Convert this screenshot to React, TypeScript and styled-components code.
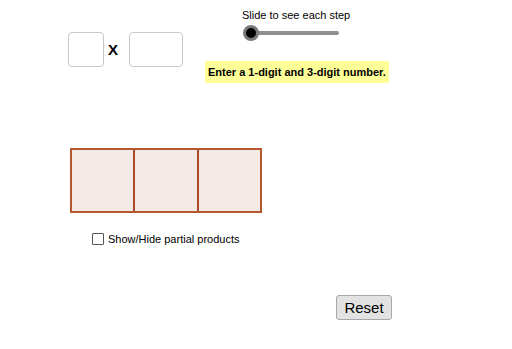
import React, { useState } from "react";
import styled, { createGlobalStyle } from "styled-components";

const GlobalStyle = createGlobalStyle`
  html, body {
    margin: 0;
    padding: 0;
    background: #ffffff;
  }
  body {
    font-family: "Liberation Sans", Arial, sans-serif;
  }
`;

const Canvas = styled.div`
  width: 512px;
  height: 349px;
  position: relative;
  overflow: hidden;
  background: #ffffff;
`;

const TopArea = styled.div`
  display: flex;
  align-items: flex-start;
  padding-left: 68px;
`;

const Inputs = styled.div`
  display: flex;
  align-items: center;
  margin-top: 32px;
`;

const NumberBox = styled.input<{ $w: number }>`
  box-sizing: border-box;
  width: ${(p) => p.$w}px;
  height: 35px;
  border: 1px solid #c8c8c8;
  border-radius: 4px;
  background: #ffffff;
  outline: none;
  padding: 0 4px;
  font-family: "Liberation Sans", Arial, sans-serif;
  font-size: 14px;
`;

const Times = styled.span`
  width: 25px;
  padding-left: 4px;
  box-sizing: border-box;
  font-size: 15px;
  font-weight: bold;
  color: #000000;
  line-height: 35px;
`;

const Controls = styled.div`
  display: flex;
  flex-direction: column;
  margin-left: 22px;
`;

const SliderLabel = styled.div`
  margin-top: 9px;
  padding-left: 37px;
  font-size: 11px;
  line-height: 13px;
  color: #000000;
`;

const SliderTrack = styled.div`
  position: relative;
  margin-top: 3px;
  margin-left: 38px;
  width: 96px;
  height: 16px;
`;

const TrackLine = styled.div`
  position: absolute;
  left: 8px;
  right: 0;
  top: 6px;
  height: 4px;
  border-radius: 2px;
  background: #8f8f8f;
`;

const Knob = styled.div`
  position: absolute;
  left: 0;
  top: 0;
  box-sizing: border-box;
  width: 16px;
  height: 16px;
  border-radius: 50%;
  background: #000000;
  border: 3px solid #7a7a7a;
`;

const Note = styled.div`
  margin-top: 20px;
  align-self: flex-start;
  background: #ffff99;
  padding: 0 3px;
  height: 22px;
  line-height: 22px;
  font-size: 11px;
  font-weight: bold;
  color: #000000;
  white-space: nowrap;
`;

const Grid = styled.div`
  display: flex;
  margin-top: 65px;
  margin-left: 70px;
  width: max-content;
  border: 2px solid #b5582f;
`;

const Cell = styled.div<{ $last?: boolean }>`
  width: 61.33px;
  height: 61px;
  background: #f5e9e5;
  border-right: ${(p) => (p.$last ? "none" : "2px solid #a94a22")};
`;

const CheckRow = styled.label`
  display: flex;
  align-items: center;
  margin-top: 20px;
  margin-left: 92px;
  font-size: 11px;
  color: #000000;
  cursor: pointer;
`;

const Box = styled.span<{ $on: boolean }>`
  box-sizing: border-box;
  width: 12px;
  height: 12px;
  border: 1px solid #555555;
  border-radius: 1px;
  background: ${(p) => (p.$on ? "#4a7bd0" : "#ffffff")};
  margin-right: 4px;
`;

const ButtonRow = styled.div`
  display: flex;
  margin-top: 50px;
  padding-left: 336px;
`;

const ResetButton = styled.button`
  box-sizing: border-box;
  width: 56px;
  height: 25px;
  border: 1px solid #a8a8a8;
  border-radius: 3px;
  background: #e2e2e2;
  font-family: "Liberation Sans", Arial, sans-serif;
  font-size: 15px;
  color: #000000;
  padding: 0;
`;

export default function App() {
  const [a, setA] = useState("");
  const [b, setB] = useState("");
  const [show, setShow] = useState(false);

  return (
    <Canvas>
      <GlobalStyle />
      <TopArea>
        <Inputs>
          <NumberBox $w={36} value={a} onChange={(e) => setA(e.target.value)} />
          <Times>X</Times>
          <NumberBox $w={54} value={b} onChange={(e) => setB(e.target.value)} />
        </Inputs>
        <Controls>
          <SliderLabel>Slide to see each step</SliderLabel>
          <SliderTrack>
            <TrackLine />
            <Knob />
          </SliderTrack>
          <Note>Enter a 1-digit and 3-digit number.</Note>
        </Controls>
      </TopArea>
      <Grid>
        <Cell />
        <Cell />
        <Cell $last />
      </Grid>
      <CheckRow onClick={() => setShow(!show)}>
        <Box $on={show} />
        Show/Hide partial products
      </CheckRow>
      <ButtonRow>
        <ResetButton
          onClick={() => {
            setA("");
            setB("");
            setShow(false);
          }}
        >
          Reset
        </ResetButton>
      </ButtonRow>
    </Canvas>
  );
}
